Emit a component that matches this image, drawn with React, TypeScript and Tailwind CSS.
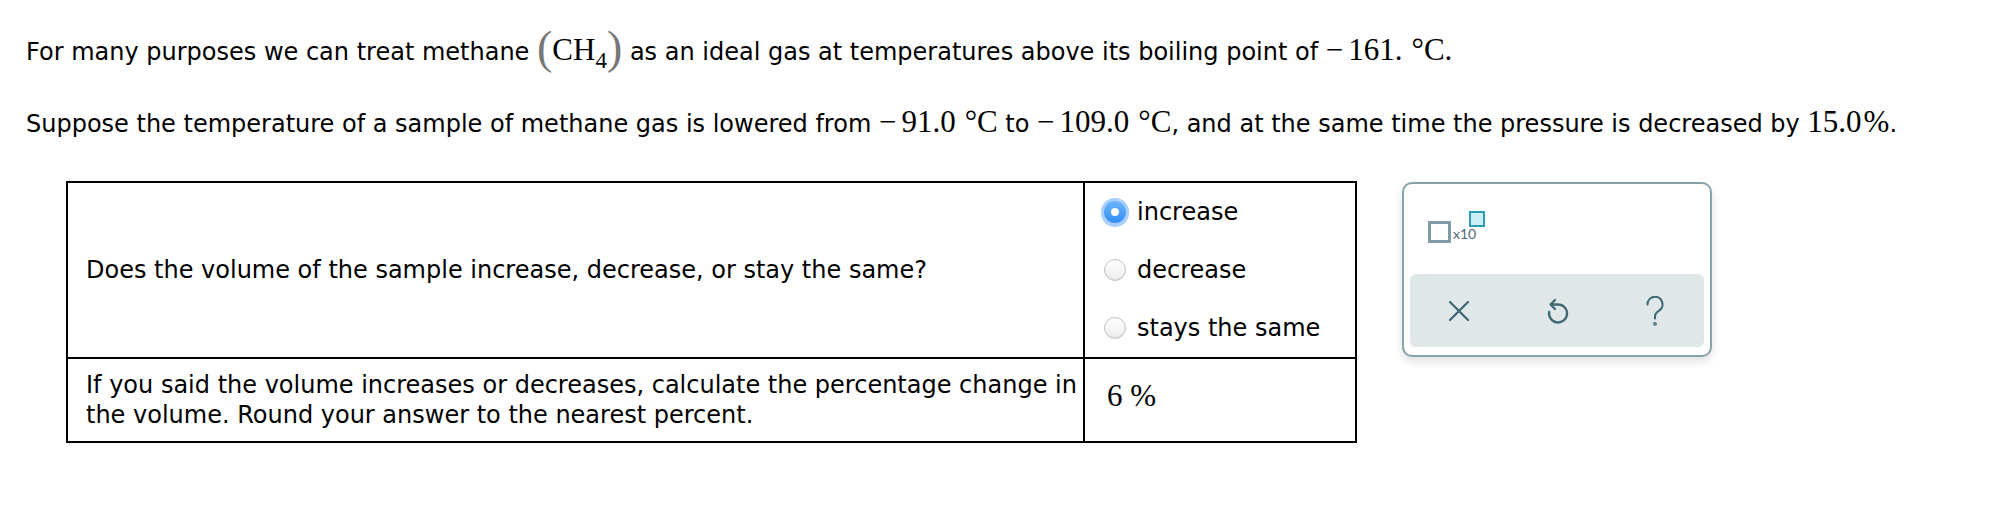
import React from 'react';

function M({ children, className = '' }: { children: React.ReactNode; className?: string }) {
  return <span className={`font-['Liberation_Serif',serif] text-[31px] leading-[0] ${className}`}>{children}</span>;
}

function Radio({ checked, label }: { checked?: boolean; label: string }) {
  return (
    <div className="flex items-center h-[58px]">
      <div className="w-[28px] h-[28px] flex items-center justify-center">
        {checked ? (
          <div className="w-[29px] h-[29px] rounded-full bg-[#a9cffa] flex items-center justify-center">
            <div className="w-[22px] h-[22px] rounded-full bg-linear-to-b from-[#6db5ff] to-[#2f8df2] flex items-center justify-center">
              <div className="w-[8px] h-[8px] rounded-full bg-white" />
            </div>
          </div>
        ) : (
          <div className="w-[22px] h-[22px] rounded-full border border-[#c2c2c2] bg-linear-to-b from-white to-[#ececec] shadow-[inset_0_-1px_1px_rgba(0,0,0,0.06)]" />
        )}
      </div>
      <span className="ml-[8px]">{label}</span>
    </div>
  );
}

function TimesIcon() {
  return (
    <svg width="22" height="22" viewBox="0 0 22 22" fill="none" stroke="#3f6874" strokeWidth="2.3" strokeLinecap="round">
      <path d="M2 2 L20 20 M20 2 L2 20" />
    </svg>
  );
}

function UndoIcon() {
  return (
    <svg width="24" height="24" viewBox="0 0 24 24" fill="none" stroke="#3f6874" strokeWidth="2.3" strokeLinecap="round" strokeLinejoin="round" className="overflow-visible">
      <path d="M13 5.5 H5.5 M10 1 L5.5 5.5 L10 10 M13 5.5 A9 9 0 1 1 4.2 12.8" />
    </svg>
  );
}

function HelpIcon() {
  return (
    <svg width="20" height="30" viewBox="0 0 20 30" fill="none" stroke="#3f6874" strokeWidth="2.1" strokeLinecap="round">
      <path d="M2.5 8.5 A7.5 7.5 0 1 1 13.8 14.8 Q10 17 10 21 V22.5" />
      <circle cx="10" cy="27.8" r="0.6" fill="#3f6874" strokeWidth="2.6" />
    </svg>
  );
}

function Neg({ n, unit }: { n: string; unit: string }) {
  return (
    <M>
      −<span className="ml-[5px]">{n}</span>
      <span className="ml-[9px]">{unit}</span>
    </M>
  );
}

export default function App() {
  return (
    <div className="w-[2004px] h-[524px] bg-white text-black font-['DejaVu_Sans','Verdana',sans-serif] text-[24px] leading-[30px]">
      <div className="pl-[26px] pt-[37px]">
        <p className="h-[30px] whitespace-nowrap">
          For many purposes we can treat methane{' '}
          <M>
            <span className="text-[46px] text-[#777777] relative top-[3px]">(</span>
            CH
            <span className="text-[23px] relative top-[8px]">4</span>
            <span className="text-[46px] text-[#777777] relative top-[3px]">)</span>
          </M>{' '}
          as an ideal gas at temperatures above its boiling point of <Neg n="161." unit="°C." />
        </p>
        <p className="h-[30px] mt-[42px] whitespace-nowrap">
          Suppose the temperature of a sample of methane gas is lowered from <Neg n="91.0" unit="°C" /> to{' '}
          <Neg n="109.0" unit="°C" />, and at the same time the pressure is decreased by{' '}
          <M>
            15.0<span className="ml-[2px]">%</span>
          </M>
          .
        </p>
      </div>

      <div className="flex items-start ml-[66px] mt-[42px]">
        <div className="w-[1291px] border-2 border-black">
          <div className="flex border-b-2 border-black">
            <div className="w-[1017px] border-r-2 border-black flex items-center pl-[18px]">
              Does the volume of the sample increase, decrease, or stay the same?
            </div>
            <div className="flex-1 pl-[16px]">
              <Radio checked label="increase" />
              <Radio label="decrease" />
              <Radio label="stays the same" />
            </div>
          </div>
          <div className="flex">
            <div className="w-[1017px] border-r-2 border-black pl-[18px] py-[11px] whitespace-nowrap">
              If you said the volume increases or decreases, calculate the percentage change in
              <br />
              the volume. Round your answer to the nearest percent.
            </div>
            <div className="flex-1 pl-[22px] pt-[24px]">
              <M>6 %</M>
            </div>
          </div>
        </div>

        <div className="ml-[45px] mt-[1px] w-[310px] h-[175px] border-2 border-[#86a3ab] rounded-[10px] bg-white shadow-[0_5px_10px_rgba(0,0,0,0.12)] flex flex-col px-[6px] pb-[8px]">
          <div className="flex-1 pl-[18px] pt-[27px]">
            <div className="relative w-[60px] h-[34px]">
              <div className="absolute left-0 top-[10px] w-[23px] h-[22px] border-[3px] border-[#7f9ca5]" />
              <span className="absolute left-[25px] top-[15px] text-[14px] leading-[16px] text-[#4d6a74] font-['Lato',sans-serif]">
                x10
              </span>
              <div className="absolute left-[41px] top-0 w-[16px] h-[16px] border-[2.5px] border-[#2b9db5] bg-[#cdeef4]" />
            </div>
          </div>
          <div className="h-[73px] rounded-[6px] bg-[#e0e7e9] grid grid-cols-3 items-center">
            <div className="flex justify-center">
              <TimesIcon />
            </div>
            <div className="flex justify-center">
              <UndoIcon />
            </div>
            <div className="flex justify-center">
              <HelpIcon />
            </div>
          </div>
        </div>
      </div>
    </div>
  );
}
